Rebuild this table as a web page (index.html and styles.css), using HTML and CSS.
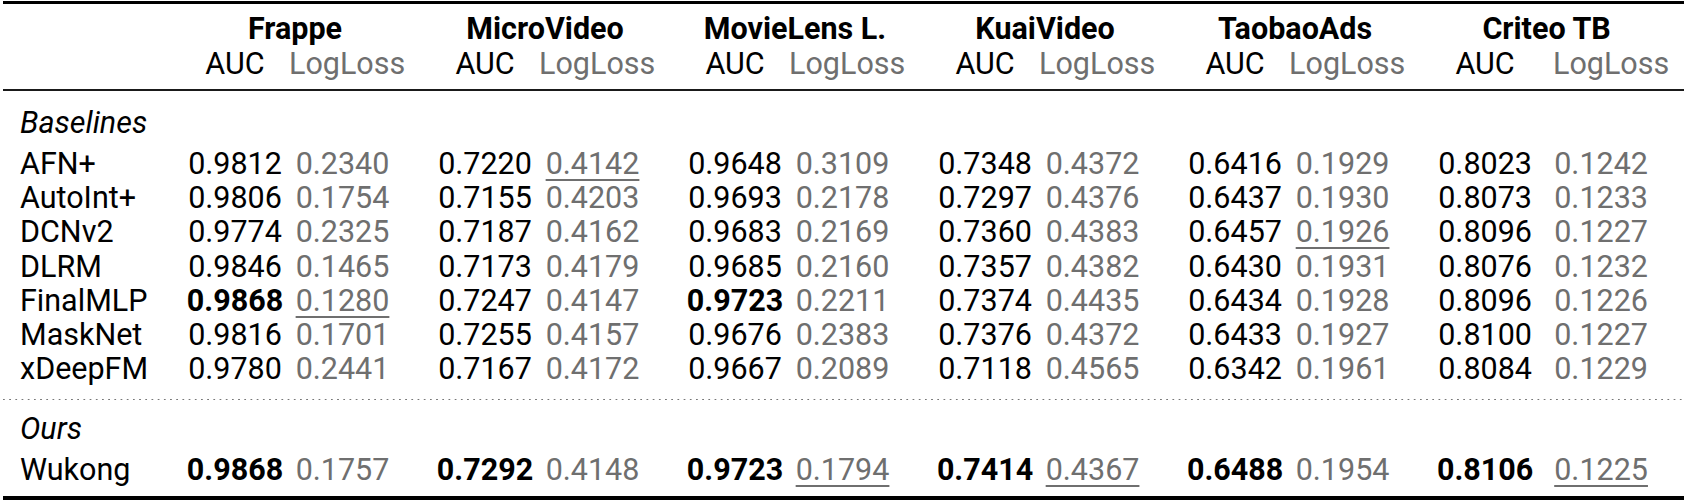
FILE: index.html
```html
<!DOCTYPE html>
<html>
<head>
<meta charset="utf-8">
<link rel="stylesheet" href="styles.css">
</head>
<body>
<table class="results">
  <colgroup>
    <col class="c-label">
    <col class="c-auc"><col class="c-ll">
    <col class="c-auc"><col class="c-ll">
    <col class="c-auc"><col class="c-ll">
    <col class="c-auc"><col class="c-ll">
    <col class="c-auc"><col class="c-ll">
    <col class="c-auc"><col class="c-ll-last">
  </colgroup>
  <thead>
    <tr class="titles">
      <th></th>
      <th colspan="2" class="ds">Frappe</th>
      <th colspan="2" class="ds">MicroVideo</th>
      <th colspan="2" class="ds">MovieLens L.</th>
      <th colspan="2" class="ds">KuaiVideo</th>
      <th colspan="2" class="ds">TaobaoAds</th>
      <th colspan="2" class="ds">Criteo TB</th>
    </tr>
    <tr class="metrics">
      <th></th>
      <th class="auc">AUC</th><th class="ll">LogLoss</th>
      <th class="auc">AUC</th><th class="ll">LogLoss</th>
      <th class="auc">AUC</th><th class="ll">LogLoss</th>
      <th class="auc">AUC</th><th class="ll">LogLoss</th>
      <th class="auc">AUC</th><th class="ll">LogLoss</th>
      <th class="auc">AUC</th><th class="ll last-h">LogLoss</th>
    </tr>
  </thead>
  <tbody>
    <tr class="group"><td class="label grp">Baselines</td><td colspan="12"></td></tr>
    <tr>
      <td class="label">AFN+</td>
      <td class="auc">0.9812</td><td class="ll">0.2340</td>
      <td class="auc">0.7220</td><td class="ll"><span class="best">0.4142</span></td>
      <td class="auc">0.9648</td><td class="ll">0.3109</td>
      <td class="auc">0.7348</td><td class="ll">0.4372</td>
      <td class="auc">0.6416</td><td class="ll">0.1929</td>
      <td class="auc">0.8023</td><td class="ll last">0.1242</td>
    </tr>
    <tr>
      <td class="label">AutoInt+</td>
      <td class="auc">0.9806</td><td class="ll">0.1754</td>
      <td class="auc">0.7155</td><td class="ll">0.4203</td>
      <td class="auc">0.9693</td><td class="ll">0.2178</td>
      <td class="auc">0.7297</td><td class="ll">0.4376</td>
      <td class="auc">0.6437</td><td class="ll">0.1930</td>
      <td class="auc">0.8073</td><td class="ll last">0.1233</td>
    </tr>
    <tr>
      <td class="label">DCNv2</td>
      <td class="auc">0.9774</td><td class="ll">0.2325</td>
      <td class="auc">0.7187</td><td class="ll">0.4162</td>
      <td class="auc">0.9683</td><td class="ll">0.2169</td>
      <td class="auc">0.7360</td><td class="ll">0.4383</td>
      <td class="auc">0.6457</td><td class="ll"><span class="best">0.1926</span></td>
      <td class="auc">0.8096</td><td class="ll last">0.1227</td>
    </tr>
    <tr>
      <td class="label">DLRM</td>
      <td class="auc">0.9846</td><td class="ll">0.1465</td>
      <td class="auc">0.7173</td><td class="ll">0.4179</td>
      <td class="auc">0.9685</td><td class="ll">0.2160</td>
      <td class="auc">0.7357</td><td class="ll">0.4382</td>
      <td class="auc">0.6430</td><td class="ll">0.1931</td>
      <td class="auc">0.8076</td><td class="ll last">0.1232</td>
    </tr>
    <tr>
      <td class="label">FinalMLP</td>
      <td class="auc"><b>0.9868</b></td><td class="ll"><span class="best">0.1280</span></td>
      <td class="auc">0.7247</td><td class="ll">0.4147</td>
      <td class="auc"><b>0.9723</b></td><td class="ll">0.2211</td>
      <td class="auc">0.7374</td><td class="ll">0.4435</td>
      <td class="auc">0.6434</td><td class="ll">0.1928</td>
      <td class="auc">0.8096</td><td class="ll last">0.1226</td>
    </tr>
    <tr>
      <td class="label">MaskNet</td>
      <td class="auc">0.9816</td><td class="ll">0.1701</td>
      <td class="auc">0.7255</td><td class="ll">0.4157</td>
      <td class="auc">0.9676</td><td class="ll">0.2383</td>
      <td class="auc">0.7376</td><td class="ll">0.4372</td>
      <td class="auc">0.6433</td><td class="ll">0.1927</td>
      <td class="auc">0.8100</td><td class="ll last">0.1227</td>
    </tr>
    <tr class="pre-sep">
      <td class="label">xDeepFM</td>
      <td class="auc">0.9780</td><td class="ll">0.2441</td>
      <td class="auc">0.7167</td><td class="ll">0.4172</td>
      <td class="auc">0.9667</td><td class="ll">0.2089</td>
      <td class="auc">0.7118</td><td class="ll">0.4565</td>
      <td class="auc">0.6342</td><td class="ll">0.1961</td>
      <td class="auc">0.8084</td><td class="ll last">0.1229</td>
    </tr>
    <tr class="sep"><td colspan="13"><div class="dots"></div></td></tr>
    <tr class="group"><td class="label grp">Ours</td><td colspan="12"></td></tr>
    <tr class="last-row">
      <td class="label">Wukong</td>
      <td class="auc"><b>0.9868</b></td><td class="ll">0.1757</td>
      <td class="auc"><b>0.7292</b></td><td class="ll">0.4148</td>
      <td class="auc"><b>0.9723</b></td><td class="ll"><span class="best">0.1794</span></td>
      <td class="auc"><b>0.7414</b></td><td class="ll"><span class="best">0.4367</span></td>
      <td class="auc"><b>0.6488</b></td><td class="ll">0.1954</td>
      <td class="auc"><b>0.8106</b></td><td class="ll last"><span class="best">0.1225</span></td>
    </tr>
  </tbody>
</table>
</body>
</html>
```

FILE: styles.css
```css
html, body {
  margin: 0;
  padding: 0;
  background: #ffffff;
}

body {
  padding: 1px 0 0 3px;
  font-family: "Roboto", "Liberation Sans", sans-serif;
  font-size: 30.5px;
  line-height: 34.25px;
  color: #000000;
}

.results {
  width: 1681px;
  table-layout: fixed;
  border-collapse: collapse;
  border-top: 3px solid #000;
  border-bottom: 4px solid #000;
}

.c-label { width: 178px; }
.c-auc { width: 108px; }
.c-ll { width: 142px; }
.c-ll-last { width: 145px; }

th, td {
  padding: 0;
  white-space: nowrap;
  font-weight: 400;
}

.titles th {
  padding-top: 8px;
  font-weight: 700;
}

.titles .ds {
  text-align: center;
  padding-left: 12px;
  padding-right: 34px;
}

.metrics th {
  padding-top: 1px;
  padding-bottom: 7px;
  border-bottom: 2px solid #1a1a1a;
}

.auc {
  text-align: center;
}

.ll {
  text-align: center;
  padding-right: 35px;
  color: #6f6f6f;
}

.metrics .ll {
  padding-right: 41px;
}

.ll.last {
  padding-right: 21px;
}

.metrics .ll.last-h {
  padding-right: 1px;
}

.label {
  padding-left: 17px;
  text-align: left;
}

.grp {
  font-style: italic;
}

tbody tr.group:first-child td {
  padding-top: 15px;
}

tr.group td {
  padding-bottom: 7px;
}

.pre-sep td {
  padding-bottom: 12px;
}

.sep td {
  padding: 0 0 12px 0;
  line-height: 0;
}

.dots {
  height: 1.5px;
  background-image: linear-gradient(to right, #777 0, #777 1.5px, transparent 1.5px);
  background-size: 6.2px 1.5px;
  background-repeat: repeat-x;
}

.last-row td {
  padding-bottom: 8px;
}

.best {
  text-decoration: underline;
  text-decoration-thickness: 1.5px;
  text-underline-offset: 5px;
}

b {
  font-weight: 700;
  color: #000;
}
```
